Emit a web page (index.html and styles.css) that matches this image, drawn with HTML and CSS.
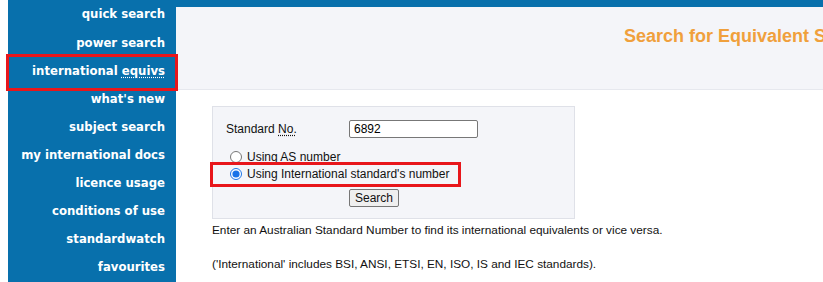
FILE: index.html
```html
<!DOCTYPE html>
<html>
<head>
<meta charset="utf-8">
<link rel="stylesheet" href="styles.css">
</head>
<body>
<div class="page">
  <nav class="sidebar">
    <a class="nav-item">quick search</a>
    <a class="nav-item">power search</a>
    <a class="nav-item">international <abbr class="dotted">equivs</abbr></a>
    <a class="nav-item">what's new</a>
    <a class="nav-item">subject search</a>
    <a class="nav-item">my international docs</a>
    <a class="nav-item">licence usage</a>
    <a class="nav-item">conditions of use</a>
    <a class="nav-item">standardwatch</a>
    <a class="nav-item">favourites</a>
  </nav>
  <main class="main">
    <header class="header">
      <h1 class="title">Search for Equivalent Standards</h1>
    </header>
    <section class="content">
      <form class="search-box">
        <div class="row-std">
          <label class="std-label">Standard <abbr class="dotted">No.</abbr></label>
          <input class="std-input" type="text" value="6892">
        </div>
        <label class="radio-row"><input type="radio" name="t"> Using AS number</label>
        <label class="radio-row"><input type="radio" name="t" checked> Using International standard's number</label>
        <div class="btn-row"><button type="button" class="btn">Search</button></div>
      </form>
      <p class="info">Enter an Australian Standard Number to find its international equivalents or vice versa.</p>
      <p class="info info2">('International' includes BSI, ANSI, ETSI, EN, ISO, IS and IEC standards).</p>
    </section>
  </main>
</div>
<div class="mark mark-nav"></div>
<div class="mark mark-radio"></div>
</body>
</html>
```
FILE: styles.css
```css
html, body {
  margin: 0;
  padding: 0;
  background: #ffffff;
  overflow: hidden;
}
body {
  padding-left: 8px;
  width: 1100px;
  height: 282px;
  font-family: "Liberation Sans", Arial, sans-serif;
  position: relative;
}
.page {
  display: flex;
  height: 282px;
}
.sidebar {
  width: 168px;
  background: #0870ac;
  display: flex;
  flex-direction: column;
  flex-shrink: 0;
}
.nav-item {
  display: block;
  text-align: right;
  padding-right: 11px;
  height: 28px;
  line-height: 28px;
  color: #ffffff;
  font-family: "DejaVu Sans", Verdana, sans-serif;
  font-weight: bold;
  font-size: 11.7px;
  white-space: nowrap;
}
.nav-item:first-child {
  height: 29px;
}
.dotted {
  text-decoration: underline dotted;
  text-underline-offset: 2px;
}
.main {
  flex: 1;
  border-top: 7px solid #0870ac;
}
.header {
  background: #f4f5f9;
  border-bottom: 1px solid #e6e8ee;
  padding-left: 448px;
  box-sizing: border-box;
  height: 83px;
}
.title {
  margin: 0;
  padding-top: 19px;
  font-size: 18px;
  font-weight: bold;
  color: #f0a03c;
  white-space: nowrap;
}
.content {
  padding-left: 36px;
  padding-top: 16px;
}
.search-box {
  width: 363px;
  height: 113px;
  box-sizing: border-box;
  background: #f4f5f9;
  border: 1px solid #dfe1e8;
  padding: 13px 0 0 13px;
  font-size: 12px;
  color: #111;
}
.row-std {
  display: flex;
  align-items: center;
  height: 18px;
}
.std-label {
  width: 123px;
}
.std-input {
  width: 129px;
  height: 18px;
  box-sizing: border-box;
  border: 1px solid #777;
  border-radius: 2px;
  padding: 0 4px;
  font-family: "Liberation Sans", Arial, sans-serif;
  font-size: 12px;
  margin: 0;
}
.radio-row {
  display: flex;
  align-items: center;
  height: 17px;
  margin-left: 4px;
  white-space: nowrap;
}
.row-std + .radio-row {
  margin-top: 10px;
}
.radio-row input {
  width: 12px;
  height: 12px;
  margin: 0 5px 0 0;
  accent-color: #1a73e8;
}
.btn-row {
  padding-left: 123px;
  margin-top: 7px;
}
.btn {
  height: 18px;
  padding: 0 5px;
  font-family: "Liberation Sans", Arial, sans-serif;
  font-size: 12px;
  background: #efefef;
  border: 1px solid #767676;
  border-radius: 2px;
  line-height: 16px;
  color: #111;
}
.info {
  margin: 4px 0 0 0;
  font-size: 11.8px;
  color: #111;
  line-height: 14px;
}
.info2 {
  margin-top: 20px;
}
.mark {
  position: absolute;
  border: 3px solid #e8161b;
  box-sizing: border-box;
}
.mark-nav {
  left: 6px;
  top: 54px;
  width: 172px;
  height: 37px;
}
.mark-radio {
  left: 210px;
  top: 162px;
  width: 251px;
  height: 25px;
}
```
